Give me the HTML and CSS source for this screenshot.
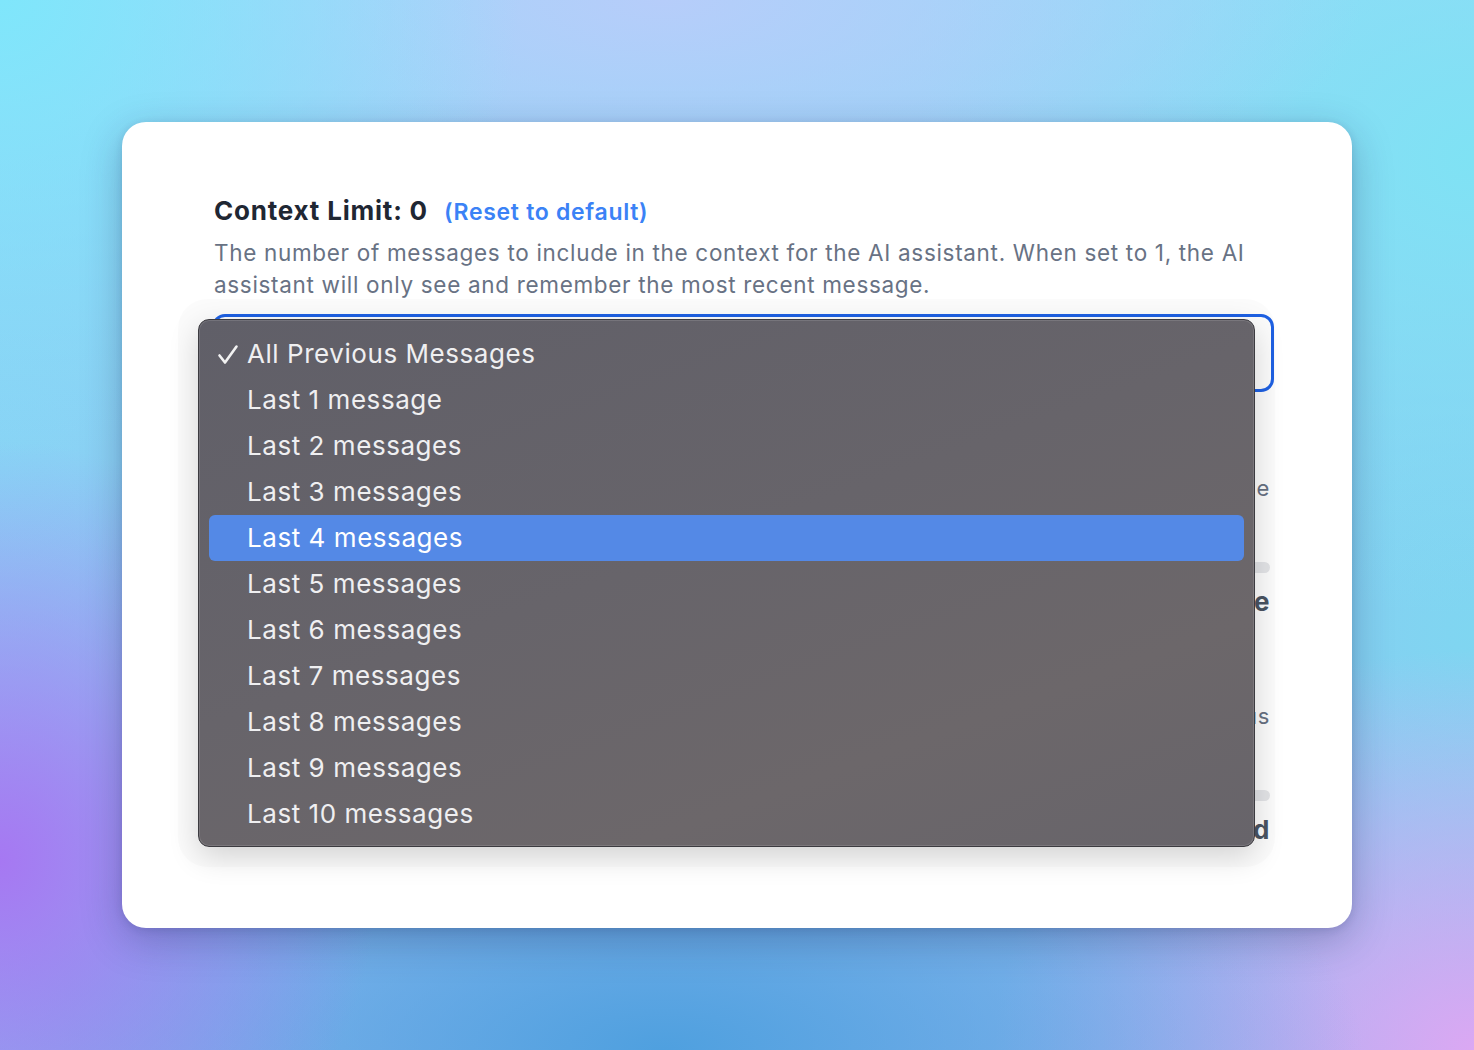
FILE: index.html
```html
<!DOCTYPE html>
<html>

<head>
    <meta charset="UTF-8">
    <meta name="viewport" content="width=device-width, initial-scale=1.0">
    <title>Context Limit</title>
    <link rel="stylesheet" href="styles.css">
</head>

<body>
    <div class="card">
        <div class="settings">
            <div class="setting">
                <div class="setting-title">
                    <span class="title-text">Context Limit: 0</span>
                    <a href="#" class="reset-link">(Reset to default)</a>
                </div>
                <p class="setting-desc">The number of messages to include in the context for the AI assistant. When set to 1, the AI assistant will only see and remember the most recent message.</p>
                <div class="select-field"></div>

                <!-- open dropdown of the select -->
                <div class="menu">
                    <div class="menu-item checked">
                        <svg class="check" width="22" height="22" viewBox="0 0 22 22">
                            <path d="M2.5 11.5 L8 18.5 L19.5 2.5" fill="none" stroke="#f2f2f2" stroke-width="2.6" stroke-linecap="round" stroke-linejoin="round"/>
                        </svg>
                        All Previous Messages
                    </div>
                    <div class="menu-item">Last 1 message</div>
                    <div class="menu-item">Last 2 messages</div>
                    <div class="menu-item">Last 3 messages</div>
                    <div class="menu-item active">Last 4 messages</div>
                    <div class="menu-item">Last 5 messages</div>
                    <div class="menu-item">Last 6 messages</div>
                    <div class="menu-item">Last 7 messages</div>
                    <div class="menu-item">Last 8 messages</div>
                    <div class="menu-item">Last 9 messages</div>
                    <div class="menu-item">Last 10 messages</div>
                </div>
            </div>

            <div class="setting">
                <div class="setting-title"><span class="title-text">Temperature: 0.7</span></div>
                <p class="setting-desc justified">Controls how random the replies are. A lower value gives focused answers, a higher value gives more varied and more creative replies to the same prompt in every conversation.</p>
                <div class="slider"></div>
                <div class="slider-labels">
                    <span>Precise</span>
                    <span>Neutral</span>
                    <span>Creative</span>
                </div>
            </div>

            <div class="setting">
                <div class="setting-title"><span class="title-text">Max Tokens: 4000</span></div>
                <p class="setting-desc justified">The maximum length of a single reply of the AI assistant, counted in tokens, words plus punctuation and symbols. Longer replies use more credits.</p>
                <div class="slider"></div>
                <div class="slider-labels">
                    <span>Short</span>
                    <span>Long</span>
                    <span>Unlimited</span>
                </div>
            </div>
        </div>
    </div>
</body>

</html>
```

FILE: styles.css
```css
body {
    margin: 0;
    padding: 0;
    width: 1474px;
    height: 1050px;
    overflow: hidden;
    font-family: Inter, "Noto Sans", sans-serif;
    background-color: #8fc8f2;
    background-image:
        radial-gradient(ellipse 520px 460px at 0% 0%, #7fe6fb 0%, rgba(127, 230, 251, 0) 100%),
        radial-gradient(ellipse 700px 260px at 45% 0%, #b6cdfa 0%, rgba(182, 205, 250, 0) 100%),
        radial-gradient(ellipse 560px 460px at 100% 15%, #7fe2f4 0%, rgba(127, 226, 244, 0) 100%),
        radial-gradient(ellipse 380px 420px at 0% 82%, #a678f2 0%, rgba(166, 120, 242, 0) 100%),
        radial-gradient(ellipse 700px 300px at 45% 100%, #4fa0df 0%, rgba(79, 160, 223, 0) 100%),
        radial-gradient(ellipse 480px 400px at 100% 100%, #dba8f3 0%, rgba(219, 168, 243, 0) 100%),
        radial-gradient(ellipse 420px 460px at 100% 60%, #7fd6f1 0%, rgba(127, 214, 241, 0) 100%),
        radial-gradient(ellipse 420px 380px at 0% 45%, #88d4f5 0%, rgba(136, 212, 245, 0) 100%),
        linear-gradient(180deg, #98d8f8 0%, #8ab6ee 100%);
}

.card {
    box-sizing: border-box;
    width: 1230px;
    height: 806px;
    margin: 122px 0 0 122px;
    padding: 71px 82px 0 92px;
    background: #fff;
    border-radius: 24px;
    box-shadow: 0 12px 40px rgba(20, 30, 80, 0.28), 0 2px 8px rgba(20, 30, 80, 0.12);
    overflow: hidden;
}

.settings {
    display: flex;
    flex-direction: column;
    gap: 36px;
}

.setting {
    position: relative;
}

.setting-title {
    display: flex;
    align-items: baseline;
    gap: 16px;
    height: 36px;
    line-height: 36px;
}

.title-text {
    font-size: 26px;
    font-weight: 700;
    color: #1f2733;
    letter-spacing: 0.8px;
}

.reset-link {
    font-size: 23px;
    font-weight: 600;
    color: #3b82f6;
    text-decoration: none;
    letter-spacing: 0.7px;
}

.setting-desc {
    margin: 8px 0 0 0;
    font-size: 22.5px;
    line-height: 32px;
    color: #687284;
    letter-spacing: 0.68px;
}

.setting-desc.justified {
    font-size: 22px;
    letter-spacing: 0.65px;
    text-align: justify;
}

.select-field {
    box-sizing: border-box;
    height: 78px;
    margin: 13px -4px 0 -2px;
    border: 3px solid #1f62e6;
    border-radius: 13px;
}

.slider {
    height: 11px;
    margin-top: 26px;
    background: #e6e7ea;
    border-radius: 6px;
}

.slider-labels {
    display: flex;
    justify-content: space-between;
    margin-top: 11px;
    line-height: 36px;
    font-size: 26px;
    font-weight: 700;
    color: #4b5563;
    letter-spacing: 0.6px;
}

/* open select menu */
.menu {
    position: absolute;
    top: 126px;
    left: -16px;
    width: 1057px;
    box-sizing: border-box;
    padding: 11px 10px 9px 10px;
    background: linear-gradient(160deg, #605f68 0%, #67646a 45%, #6c676a 75%, #67646a 100%);
    border: 1px solid #3c3b40;
    border-radius: 11px;
    box-shadow: inset 0 0 0 1px rgba(255, 255, 255, 0.12), 0 10px 30px rgba(0, 0, 0, 0.16), 0 0 0 20px rgba(0, 0, 0, 0.015);
    z-index: 5;
}

.menu-item {
    position: relative;
    height: 46px;
    line-height: 46px;
    padding-left: 38px;
    font-size: 26px;
    letter-spacing: 0.55px;
    color: #efeff1;
    border-radius: 6px;
}

.menu-item.active {
    background: #5489e6;
    color: #fff;
}

.check {
    position: absolute;
    left: 8px;
    top: 13px;
}
```
